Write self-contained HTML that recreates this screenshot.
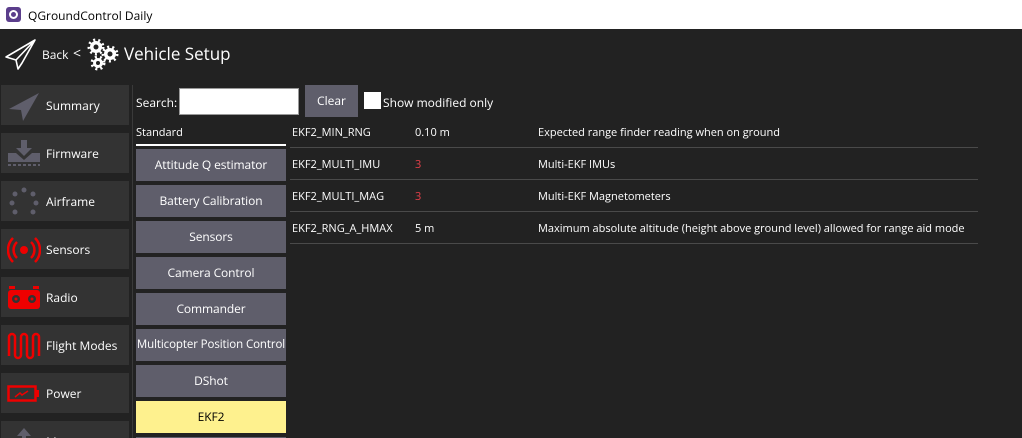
<!DOCTYPE html>
<html style="overflow:hidden;height:438px"><head><meta charset="utf-8"><style>
*{margin:0;padding:0;box-sizing:border-box}
body{width:1022px;height:438px;overflow:hidden;background:#222;font-family:"Open Sans","Liberation Sans",sans-serif;position:relative;color:#fff}
.a{position:absolute}
.tb{left:0;top:0;width:1022px;height:29px;background:#fff;color:#000;font-size:12px}
.lb{left:1px;width:128px;height:40px;background:#333}
.lb span{position:absolute;left:45px;top:12px;font-size:12px}
.lb svg{position:absolute;left:6px;top:6px}
.gb{left:136px;width:150px;height:32px;background:#5f5e6b;font-size:12px;text-align:center;line-height:32px;white-space:nowrap;letter-spacing:-0.1px}
.t{font-size:11px}
.hl{left:290px;width:688px;height:1px;background:#4a4a4a}
</style></head><body>
<div class="a tb">
 <div class="a" style="left:6px;top:7px;width:15px;height:15px;background:#5b3e8c;border-radius:3px"><div class="a" style="left:3px;top:3px;width:9px;height:9px;border-radius:50%;border:2px solid #fff"></div></div>
 <div class="a" style="left:28px;top:7px">QGroundControl Daily</div>
</div>
<svg class="a" style="left:4px;top:37px" width="34" height="34" viewBox="0 0 34 34"><path d="M31 3 L2 20 L12 23 L14 32 L18 26 Z M31 3 L12 23 M31 3 L18 26" fill="none" stroke="#fff" stroke-width="1.6" stroke-linejoin="round"/></svg>
<div class="a" style="left:42px;top:46px;font-size:12px">Back</div>
<div class="a" style="left:73px;top:44px;font-size:14px">&lt;</div>
<svg class="a" style="left:86px;top:37px" width="34" height="34" viewBox="0 0 34 34"><g fill="#fff"><circle cx="10" cy="10" r="6"/><circle cx="24" cy="17" r="6"/><circle cx="12" cy="26" r="5"/></g><g fill="#222"><circle cx="10" cy="10" r="2.5"/><circle cx="24" cy="17" r="2.5"/><circle cx="12" cy="26" r="2"/></g><g stroke="#fff" stroke-width="3" stroke-dasharray="2 3"><circle cx="10" cy="10" r="7" fill="none"/><circle cx="24" cy="17" r="7" fill="none"/><circle cx="12" cy="26" r="6" fill="none"/></g></svg>
<div class="a" style="left:124px;top:42px;font-size:17px">Vehicle Setup</div>

<div class="a lb" style="top:85px"><svg width="34" height="30" viewBox="0 0 34 30"><path d="M32 2 L2 18 L14 19 L16 30 Z" fill="#5f5e6b"/></svg><span>Summary</span></div>
<div class="a lb" style="top:133px"><svg width="34" height="30" viewBox="0 0 34 30"><path d="M14 1h6v8h5l-8 8-8-8h5z M1 14h8l8 7 8-7h8v9H1z" fill="#5f5e6b"/><path d="M1 26h32" stroke="#5f5e6b" stroke-width="2" stroke-dasharray="3 2"/></svg><span>Firmware</span></div>
<div class="a lb" style="top:181px"><svg width="34" height="30" viewBox="0 0 34 30" fill="#5f5e6b"><circle cx="17" cy="3" r="2.5"/><circle cx="26" cy="7" r="2.5"/><circle cx="29" cy="16" r="2.5"/><circle cx="26" cy="25" r="2.5"/><circle cx="8" cy="25" r="2.5"/><circle cx="5" cy="16" r="2.5"/><circle cx="8" cy="7" r="2.5"/></svg><span>Airframe</span></div>
<div class="a lb" style="top:229px"><svg width="34" height="30" viewBox="0 0 34 30"><circle cx="17" cy="15" r="4" fill="#e00"/><path d="M10 7a11 11 0 0 0 0 16M24 7a11 11 0 0 1 0 16M6 3a17 17 0 0 0 0 24M28 3a17 17 0 0 1 0 24" stroke="#e00" stroke-width="2.5" fill="none"/></svg><span>Sensors</span></div>
<div class="a lb" style="top:277px"><svg width="34" height="30" viewBox="0 0 34 30"><rect x="1" y="7" width="32" height="19" rx="3" fill="#e00"/><rect x="2" y="3" width="6" height="3" fill="#e00"/><rect x="26" y="3" width="6" height="3" fill="#e00"/><circle cx="9" cy="16" r="4" fill="#333"/><circle cx="25" cy="16" r="4" fill="#333"/><circle cx="9" cy="16" r="1.5" fill="#e00"/><circle cx="25" cy="16" r="1.5" fill="#e00"/></svg><span>Radio</span></div>
<div class="a lb" style="top:325px"><svg width="34" height="30" viewBox="0 0 34 30"><path d="M2 25V6a3 3 0 0 1 6 0v18a3 3 0 0 0 6 0V6a3 3 0 0 1 6 0v18a3 3 0 0 0 6 0V6a3 3 0 0 1 6 0v19" stroke="#e00" stroke-width="2.5" fill="none"/></svg><span>Flight Modes</span></div>
<div class="a lb" style="top:373px"><svg width="34" height="30" viewBox="0 0 34 30"><rect x="1.5" y="7.5" width="27" height="14" fill="none" stroke="#e00" stroke-width="2.5"/><rect x="29" y="11" width="3" height="7" fill="#e00"/><path d="M8 18l5-4 2 2 6-4" stroke="#e00" stroke-width="1.5" fill="none"/></svg><span>Power</span></div>
<div class="a lb" style="top:421px;height:17px;overflow:hidden"><svg width="34" height="30" viewBox="0 0 34 30"><path d="M17 1l-7 8h5v20h4V9h5z" fill="#5f5e6b"/></svg><span>Motors</span></div>

<div class="a" style="left:132px;top:85px;width:1px;height:353px;background:#3a3a3a"></div>

<div class="a t" style="left:136px;top:94px;font-size:12px">Search:</div>
<div class="a" style="left:179px;top:88px;width:120px;height:27px;background:#fff;border:1px solid #999"></div>
<div class="a" style="left:305px;top:85px;width:53px;height:32px;background:#5f5e6b;font-size:12px;text-align:center;line-height:32px">Clear</div>
<div class="a" style="left:364px;top:92px;width:17px;height:17px;background:#fff"></div>
<div class="a" style="left:383px;top:94px;font-size:12px">Show modified only</div>

<div class="a t" style="left:136px;top:125px">Standard</div>
<div class="a" style="left:136px;top:144px;width:150px;height:2px;background:#fff"></div>
<div class="a gb" style="top:149px">Attitude Q estimator</div>
<div class="a gb" style="top:185px">Battery Calibration</div>
<div class="a gb" style="top:221px">Sensors</div>
<div class="a gb" style="top:257px">Camera Control</div>
<div class="a gb" style="top:293px">Commander</div>
<div class="a gb" style="top:329px;font-size:11.5px">Multicopter Position Control</div>
<div class="a gb" style="top:365px">DShot</div>
<div class="a gb" style="top:401px;background:#fef18e;color:#000">EKF2</div>
<div class="a gb" style="top:437px;height:1px"></div>

<div class="a t" style="left:292px;top:125px">EKF2_MIN_RNG</div><div class="a t" style="left:415px;top:125px">0.10 m</div><div class="a t" style="left:538px;top:125px">Expected range finder reading when on ground</div>
<div class="a hl" style="top:147px"></div>
<div class="a t" style="left:292px;top:157px">EKF2_MULTI_IMU</div><div class="a t" style="left:415px;top:157px;color:#e8404a">3</div><div class="a t" style="left:538px;top:157px">Multi-EKF IMUs</div>
<div class="a hl" style="top:179px"></div>
<div class="a t" style="left:292px;top:189px">EKF2_MULTI_MAG</div><div class="a t" style="left:415px;top:189px;color:#e8404a">3</div><div class="a t" style="left:538px;top:189px">Multi-EKF Magnetometers</div>
<div class="a hl" style="top:211px"></div>
<div class="a t" style="left:292px;top:221px">EKF2_RNG_A_HMAX</div><div class="a t" style="left:415px;top:221px">5 m</div><div class="a t" style="left:538px;top:221px">Maximum absolute altitude (height above ground level) allowed for range aid mode</div>
<div class="a hl" style="top:243px"></div>
</body></html>
